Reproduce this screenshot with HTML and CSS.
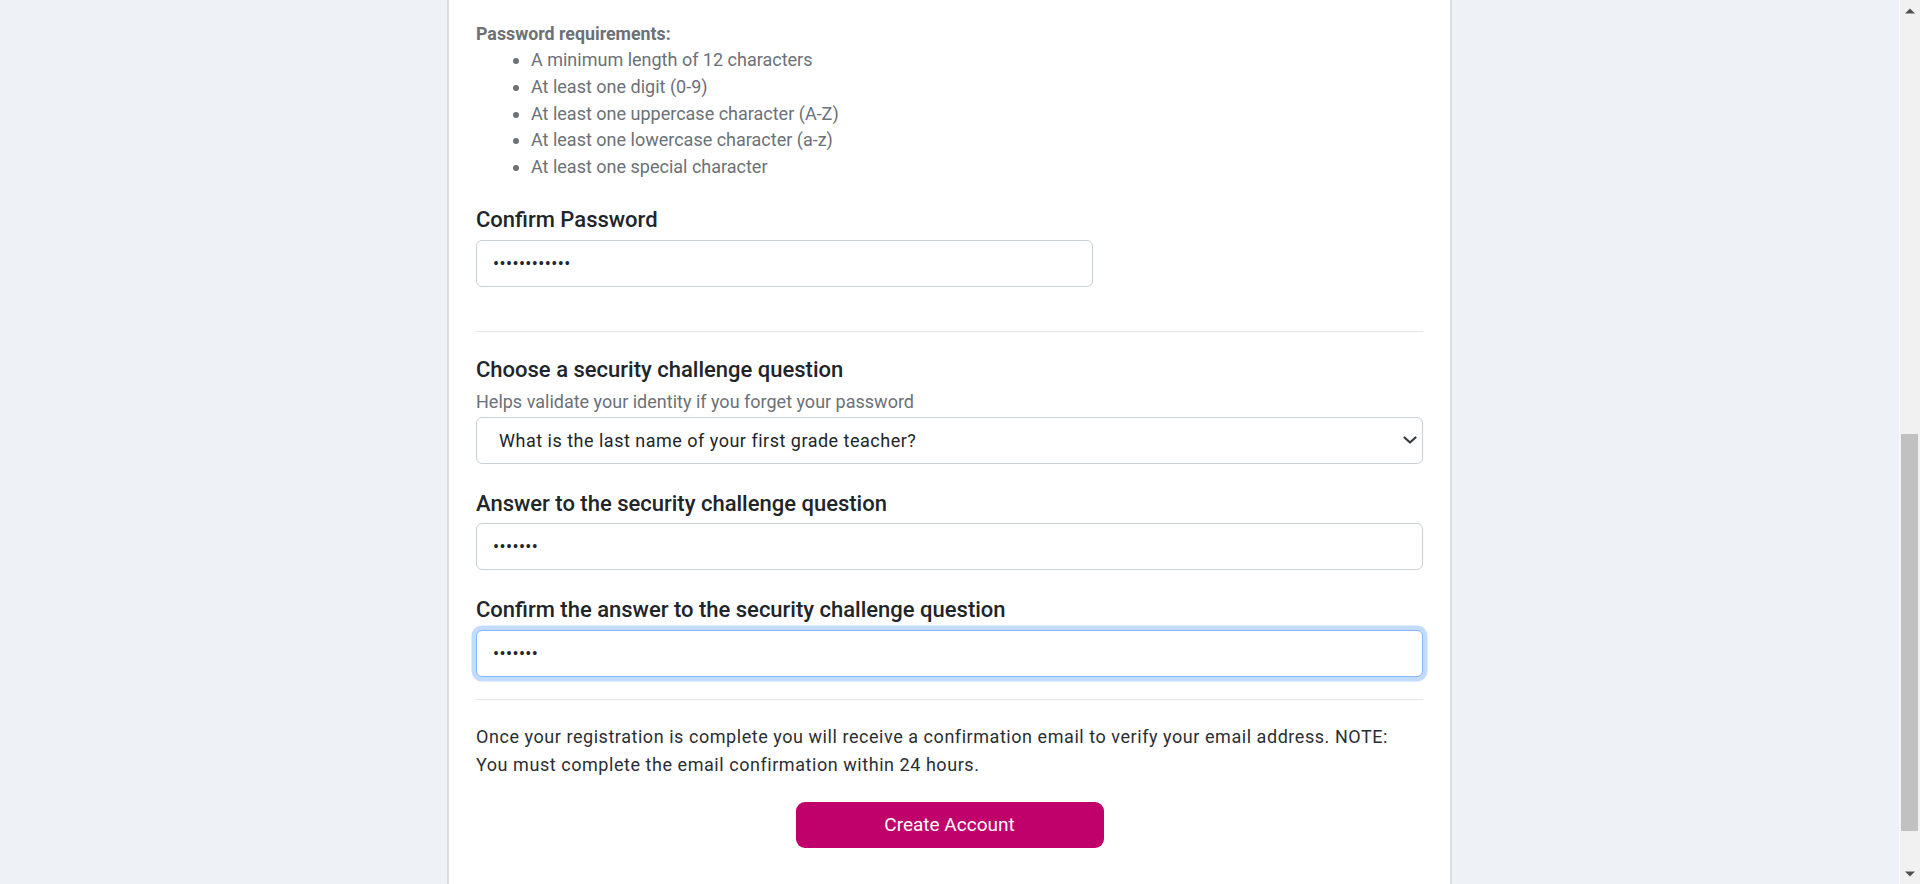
FILE: index.html
```html
<!DOCTYPE html>
<html lang="en">
<head>
<meta charset="utf-8">
<title>Create Account</title>
<link rel="stylesheet" href="styles.css">
</head>
<body>
<div class="viewport">
  <main class="page">
    <section class="card">
      <p class="req-title">Password requirements:</p>
      <ul class="req-list">
        <li>A minimum length of 12 characters</li>
        <li>At least one digit (0-9)</li>
        <li>At least one uppercase character (A-Z)</li>
        <li>At least one lowercase character (a-z)</li>
        <li>At least one special character</li>
      </ul>

      <div class="field field-first field-narrow">
        <label class="field-label" for="confirm-password">Confirm Password</label>
        <input id="confirm-password" class="control control-secret" type="password" value="abcdefghijkl">
      </div>

      <hr class="divider divider-wide">

      <div class="field field-after-divider">
        <label class="field-label field-label-tight" for="question">Choose a security challenge question</label>
        <div class="help">Helps validate your identity if you forget your password</div>
        <div class="select-wrap">
          <select id="question" class="control select">
            <option>What is the last name of your first grade teacher?</option>
          </select>
          <svg class="chevron" viewBox="0 0 16 16" width="16" height="16" aria-hidden="true">
            <path d="M2.5 5.5l5.5 5 5.5-5" fill="none" stroke="#343a40" stroke-width="2.2" stroke-linecap="round" stroke-linejoin="round"/>
          </svg>
        </div>
      </div>

      <div class="field">
        <label class="field-label" for="answer">Answer to the security challenge question</label>
        <input id="answer" class="control control-secret" type="password" value="abcdefg">
      </div>

      <div class="field">
        <label class="field-label" for="answer-confirm">Confirm the answer to the security challenge question</label>
        <input id="answer-confirm" class="control control-secret control-focus" type="password" value="abcdefg">
      </div>

      <hr class="divider divider-tight">

      <p class="note">Once your registration is complete you will receive a confirmation email to verify your email address. NOTE: You must complete the email confirmation within 24 hours.</p>

      <div class="actions">
        <button class="btn-primary" type="button">Create Account</button>
      </div>
    </section>
  </main>

  <div class="scrollbar" aria-hidden="true">
    <div class="sb-button">
      <svg viewBox="0 0 10 6" width="10" height="6"><path d="M0 5.5L5 0.5L10 5.5Z" fill="#505050"/></svg>
    </div>
    <div class="sb-track">
      <div class="sb-space-top"></div>
      <div class="sb-thumb"></div>
      <div class="sb-space-bottom"></div>
    </div>
    <div class="sb-button">
      <svg viewBox="0 0 10 6" width="10" height="6"><path d="M0 0.5L5 5.5L10 0.5Z" fill="#505050"/></svg>
    </div>
  </div>
</div>
</body>
</html>
```

FILE: styles.css
```css
* {
  box-sizing: border-box;
}

html,
body {
  margin: 0;
  padding: 0;
  height: 884px;
  overflow: hidden;
}

body {
  background: #eef2f6;
  font-family: Roboto, "Liberation Sans", Arial, sans-serif;
  font-size: 18px;
  line-height: 27px;
  color: #212529;
}

.viewport {
  display: flex;
  height: 884px;
}

.page {
  flex: 1;
  display: flex;
  justify-content: center;
  overflow: hidden;
}

.card {
  width: 1005px;
  min-height: 100%;
  background: #ffffff;
  border-left: 2px solid #dadee3;
  border-right: 2px solid #dadee3;
  padding: 20px 27px 40px;
  flex-shrink: 0;
}

.req-title {
  margin: 0;
  font-weight: 700;
  color: #6c7177;
  font-size: 17.8px;
}

.req-list {
  margin: 0;
  padding-left: 55px;
  color: #6c7177;
  line-height: 26.8px;
}

.field {
  margin-top: 25.8px;
}

.field-first {
  margin-top: 25.5px;
}

.field-after-divider {
  margin-top: 24.5px;
}

.field-narrow .control {
  width: 617px;
}

.field-label {
  display: block;
  font-size: 22px;
  font-weight: 500;
  line-height: 27px;
  color: #212529;
  margin-bottom: 6.5px;
}

.field-label-tight {
  margin-bottom: 0;
}

.help {
  margin-top: 5px;
  color: #6c7177;
  line-height: 27px;
}

.control {
  display: block;
  width: 100%;
  height: 47px;
  padding: 9px 16px;
  font-family: Roboto, "Liberation Sans", Arial, sans-serif;
  font-size: 18px;
  line-height: 27px;
  color: #212529;
  background: #ffffff;
  border: 1px solid #cbd0d5;
  border-radius: 6px;
  outline: none;
}

.control-secret {
  letter-spacing: 0.4px;
}

.control-focus {
  border-color: #86b7fe;
  box-shadow: 0 0 0 4.5px rgba(13, 110, 253, 0.25);
}

.select-wrap {
  position: relative;
  margin-top: 1.5px;
}

.select {
  appearance: none;
  -webkit-appearance: none;
  padding-left: 22px;
  padding-right: 40px;
  letter-spacing: 0.5px;
}

.chevron {
  position: absolute;
  right: 5.5px;
  top: 15.5px;
  pointer-events: none;
}

.divider {
  border: 0;
  border-top: 1px solid #e3e6ea;
  height: 0;
  margin: 0;
}

.divider-wide {
  margin-top: 44px;
}

.divider-tight {
  margin-top: 22px;
}

.note {
  margin: 23.4px 0 0;
  line-height: 28.5px;
  letter-spacing: 0.55px;
  color: #2a2e33;
}

.actions {
  display: flex;
  justify-content: center;
  margin-top: 22px;
}

.btn-primary {
  width: 308px;
  height: 46px;
  border: 0;
  border-radius: 9px;
  background: #c0006b;
  color: #ffffff;
  font-family: Roboto, "Liberation Sans", Arial, sans-serif;
  font-size: 19px;
  font-weight: 400;
  cursor: pointer;
}

/* fake classic scrollbar */
.scrollbar {
  width: 21px;
  flex-shrink: 0;
  display: flex;
  flex-direction: column;
  background: #f1f1f1;
  border-left: 1px solid #f8f9fa;
}

.sb-button {
  height: 21px;
  display: flex;
  align-items: center;
  justify-content: center;
  flex-shrink: 0;
}

.sb-track {
  flex: 1;
  display: flex;
  flex-direction: column;
  padding: 0 2px 0 1px;
}

.sb-space-top {
  height: 413px;
  flex-shrink: 0;
}

.sb-thumb {
  height: 397px;
  background: #c1c1c1;
  flex-shrink: 0;
}

.sb-space-bottom {
  flex: 1;
}
```
